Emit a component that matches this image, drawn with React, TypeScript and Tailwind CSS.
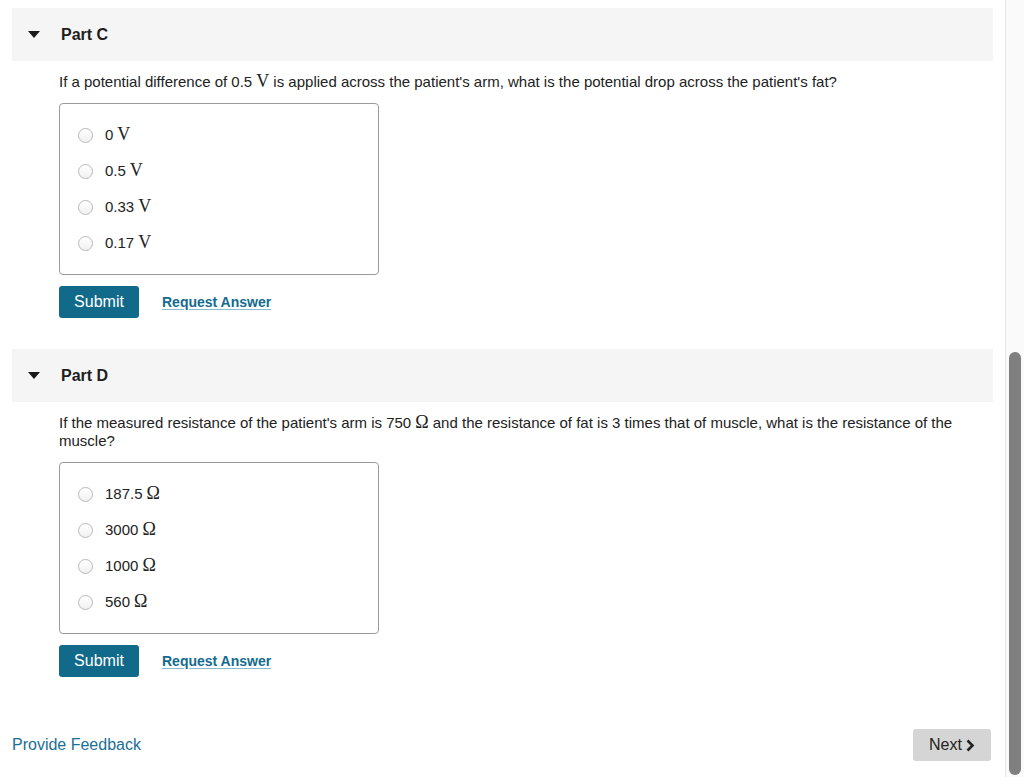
import React from 'react';

type Option = { num: string; unit: string };

const partC: Option[] = [
  { num: '0', unit: 'V' },
  { num: '0.5', unit: 'V' },
  { num: '0.33', unit: 'V' },
  { num: '0.17', unit: 'V' },
];

const partD: Option[] = [
  { num: '187.5', unit: 'Ω' },
  { num: '3000', unit: 'Ω' },
  { num: '1000', unit: 'Ω' },
  { num: '560', unit: 'Ω' },
];

const Unit: React.FC<{ children: React.ReactNode }> = ({ children }) => (
  <span className="font-['Liberation_Serif',serif] text-[18px] leading-[14px] ml-[4px]">{children}</span>
);

const Radio: React.FC = () => (
  <span className="w-[15px] h-[15px] rounded-full border border-[#b9b9b9] bg-gradient-to-b from-white to-[#f1f1f1] shrink-0" />
);

const Part: React.FC<{ title: string; question: React.ReactNode; options: Option[] }> = ({ title, question, options }) => (
  <section>
    {/* Header */}
    <div className="h-[53px] bg-[#f5f5f5] flex items-center">
      <span className="ml-[16px] w-0 h-0 border-l-[6px] border-r-[6px] border-t-[7px] border-l-transparent border-r-transparent border-t-[#1a1a1a]" />
      <h2 className="ml-[21px] text-[16px] font-bold text-[#1e1e1e]">{title}</h2>
    </div>

    <div className="pl-[47px] pr-[30px]">
      <p className="mt-[12px] text-[15px] leading-[18px] text-[#222]">{question}</p>

      {/* Options */}
      <div className="mt-[12px] w-[320px] border border-[#9a9a9a] rounded-[4px] pt-[13px] pb-[13px]">
        {options.map((o, i) => (
          <label key={i} className="h-[36px] flex items-center pl-[18px] cursor-pointer">
            <Radio />
            <span className="ml-[12px] text-[15px] text-[#222] flex items-baseline">
              {o.num}
              <Unit>{o.unit}</Unit>
            </span>
          </label>
        ))}
      </div>

      <div className="mt-[11px] flex items-center">
        <button className="w-[80px] h-[32px] bg-[#126a8b] rounded-[3px] text-white text-[16px]">Submit</button>
        <a className="ml-[23px] text-[14px] font-bold text-[#136b8f] underline underline-offset-2 decoration-[#8ab9cc] cursor-pointer">
          Request Answer
        </a>
      </div>
    </div>
  </section>
);

export default function App() {
  return (
    <div className="h-[777px] w-full flex overflow-hidden bg-white font-['Liberation_Sans',Arial,sans-serif]">
      <main className="flex-1 min-w-0 pl-[12px] pr-[12px] pt-[8px] flex flex-col">
        <Part
          title="Part C"
          question={
            <>
              If a potential difference of 0.5<Unit>V</Unit> is applied across the patient's arm, what is the potential drop across the
              patient's fat?
            </>
          }
          options={partC}
        />
        <div className="h-[31px]" />
        <Part
          title="Part D"
          question={
            <>
              <span>If the measured resistance of the patient's arm is 750</span>
              <Unit>Ω</Unit>
              <span> and the resistance of fat is 3 times that of muscle, what is the resistance of the </span>
              <span>muscle?</span>
            </>
          }
          options={partD}
        />

        {/* Footer */}
        <div className="mt-[52px] pr-[2px] flex items-center justify-between">
          <a className="text-[16px] text-[#1b6f94] cursor-pointer">Provide Feedback</a>
          <button className="w-[78px] h-[32px] bg-[#d5d5d5] rounded-[3px] text-[16px] text-[#222] flex items-center justify-center gap-[4px]">
            Next
            <svg width="9" height="13" viewBox="0 0 9 13">
              <path d="M1.5 1.5 L6.5 6.5 L1.5 11.5" fill="none" stroke="#222" strokeWidth="2.6" />
            </svg>
          </button>
        </div>
      </main>

      {/* Scrollbar */}
      <div className="w-[19px] bg-[#fafafa] border-l border-[#e6e6e6] flex flex-col pt-[352px] pb-[2px] items-center">
        <div className="w-[12px] flex-1 rounded-full bg-[#7f7f7f]" />
      </div>
    </div>
  );
}
